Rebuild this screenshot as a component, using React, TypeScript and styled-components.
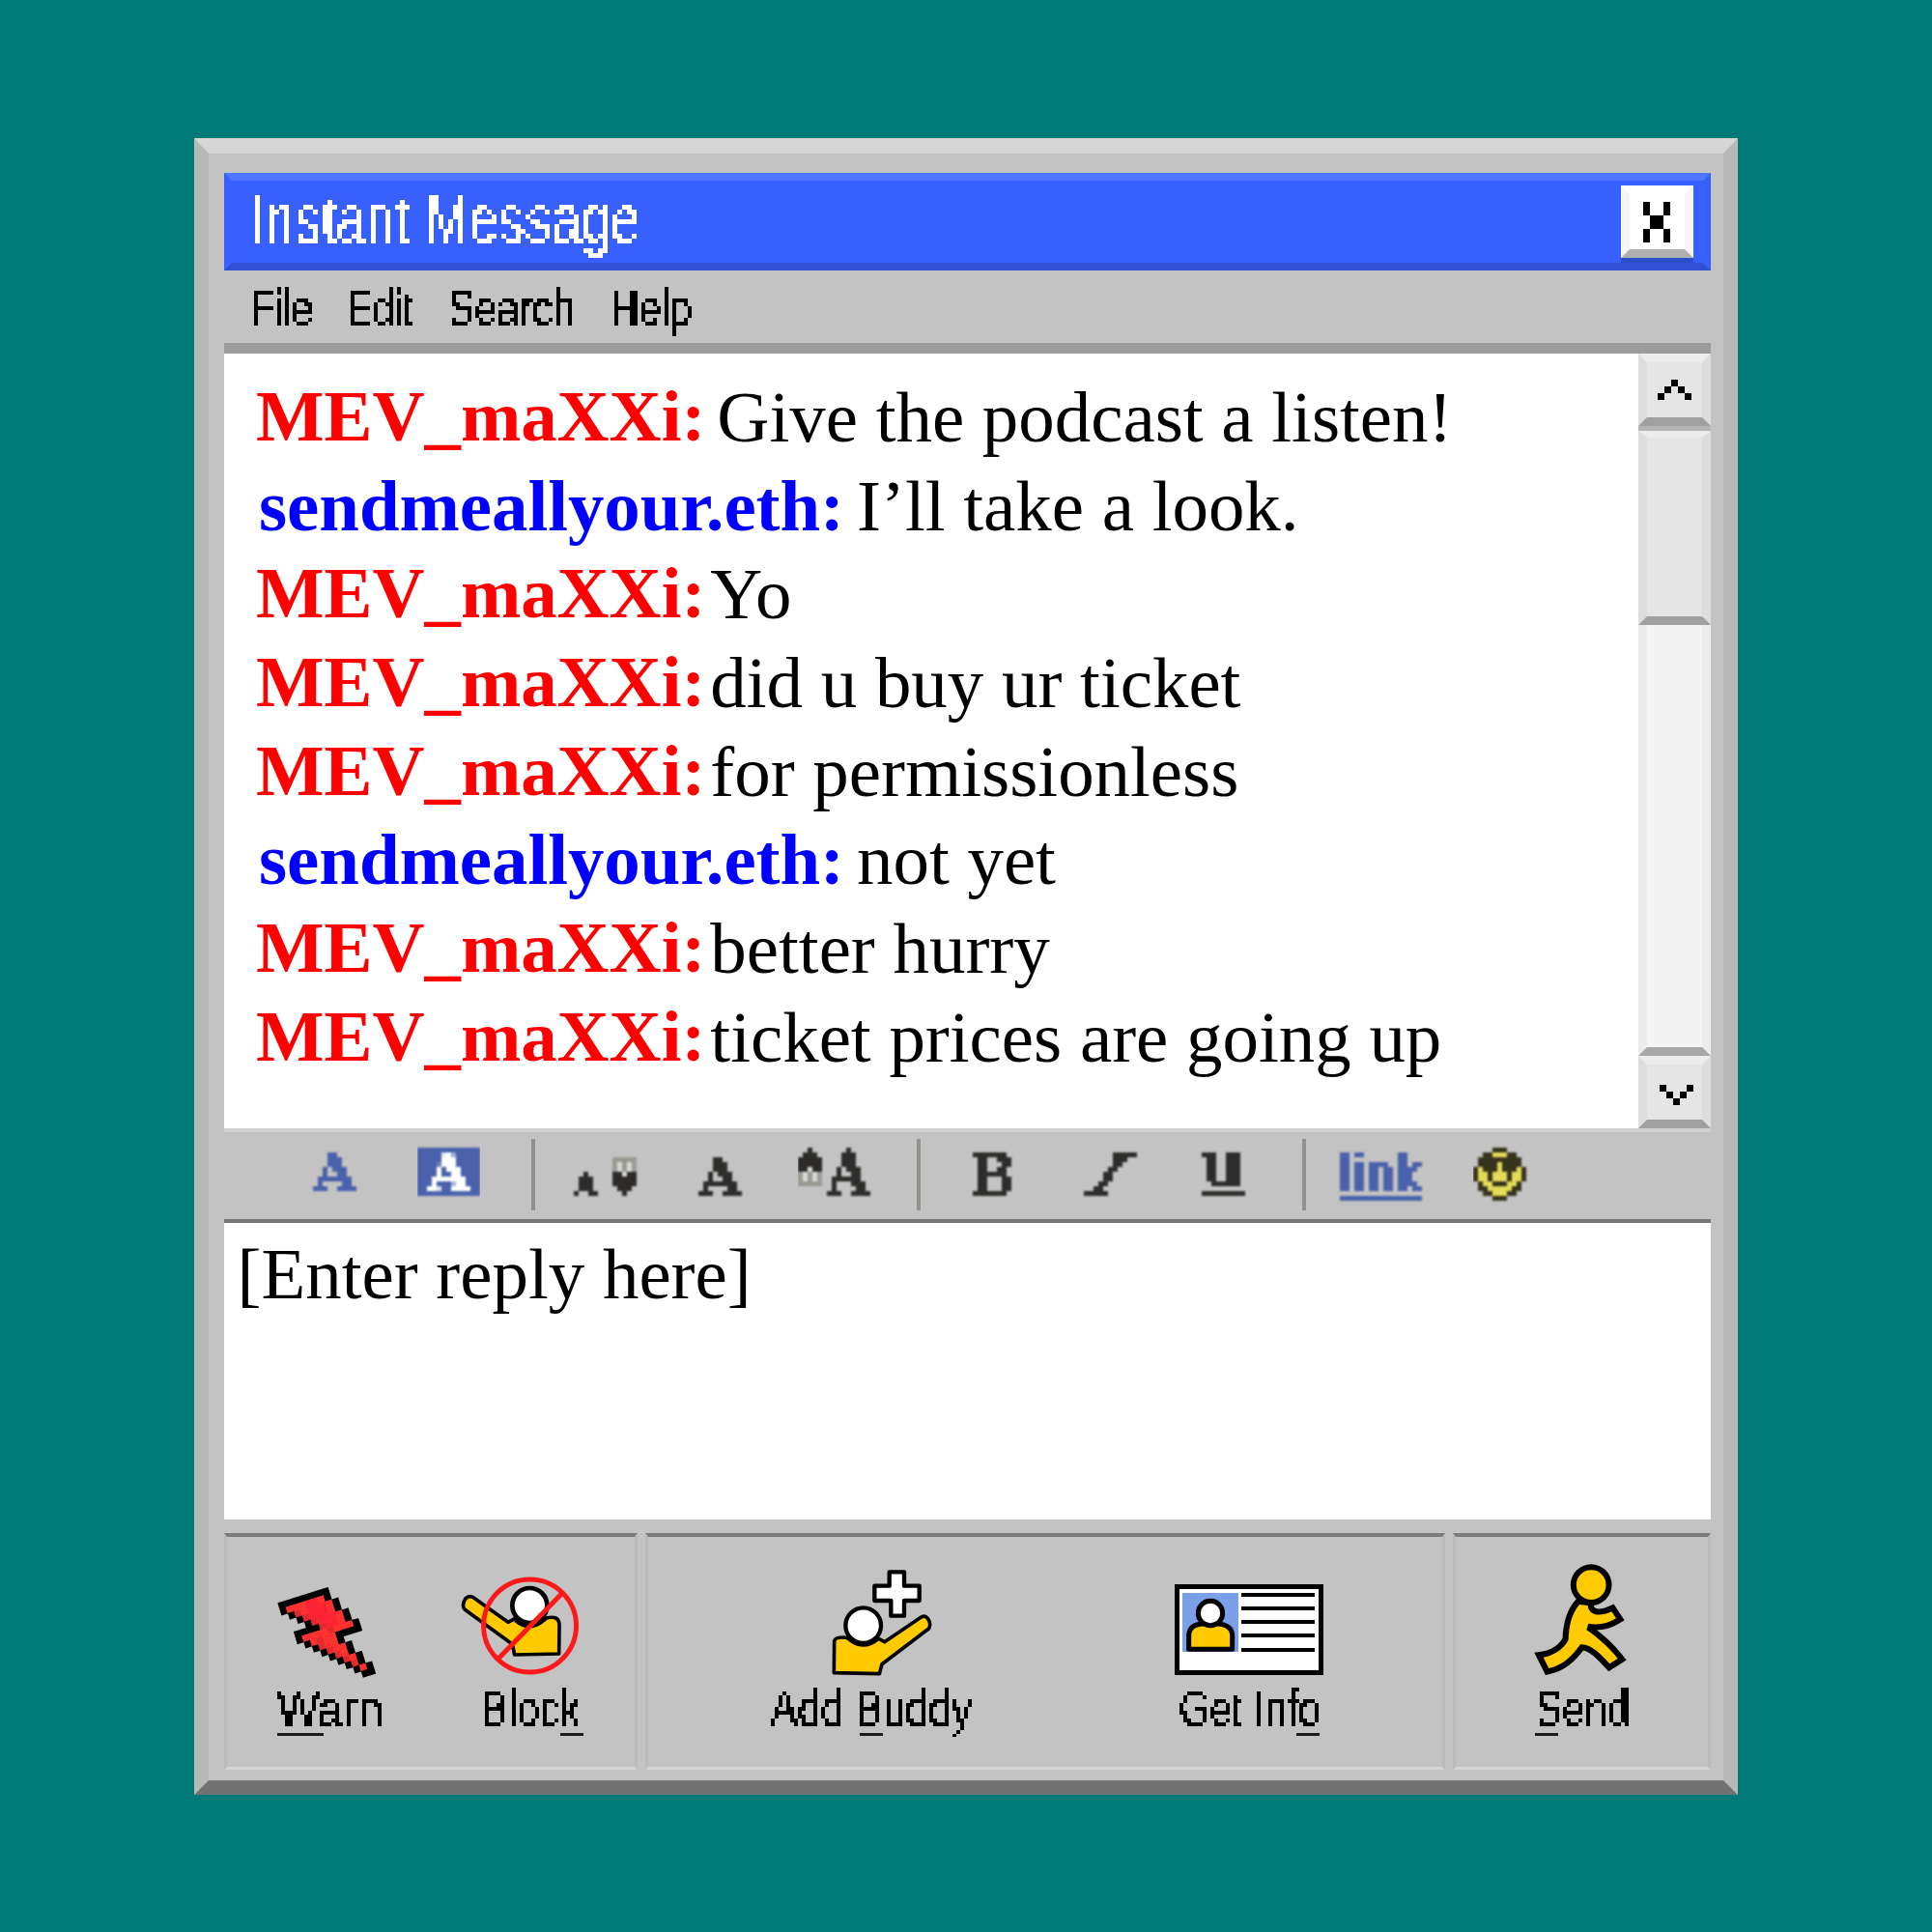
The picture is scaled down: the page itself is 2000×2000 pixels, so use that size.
import React from "react";
import styled, { createGlobalStyle } from "styled-components";

const GlobalStyle = createGlobalStyle`
  *, *::before, *::after { box-sizing: border-box; }
  html, body { margin: 0; padding: 0; background: #007979; }
`;

const Desktop = styled.main`
  display: flex;
  justify-content: center;
  width: 2000px;
  height: 2000px;
  padding-top: 143px;
  background: #007979;
  overflow: hidden;
`;

const Window = styled.section`
  display: flex;
  flex-direction: column;
  width: 1598px;
  height: 1715px;
  padding: 20px 13px 11px 16px;
  border: 15px solid;
  border-top-width: 16px;
  border-color: #d6d6d6 #b9b9b9 #727272;
  background: #c3c3c3;
`;

const TitleBar = styled.header`
  display: flex;
  justify-content: space-between;
  align-items: flex-start;
  height: 101px;
  padding: 5px 10px 0 19px;
  border: 8px solid;
  border-color: #5076ff #3860ff #2f50d4;
  background: #3860ff;
`;

const Title = styled.h1`
  margin: -5px 0 0;
  font-weight: 400;
`;

const PixelBox = styled.span<{ $w: number; $h: number; $cell: number; $x: number }>`
  display: block;
  flex: none;
  width: ${(p) => p.$w}px;
  height: ${(p) => p.$h}px;
  margin-left: ${(p) => p.$x}px;
  filter: url(#cells-${(p) => p.$cell});
`;

const PixelGlyphs = styled.span<{ $size: number; $h: number; $k: number; $color: string; $stroke: number }>`
  display: inline-block;
  font: ${(p) => p.$size}px/${(p) => p.$h}px "Liberation Sans", Arial, sans-serif;
  white-space: nowrap;
  color: ${(p) => p.$color};
  -webkit-text-stroke: ${(p) => p.$stroke}px ${(p) => p.$color};
  transform: scaleX(${(p) => p.$k});
  transform-origin: 0 0;
`;

interface PixelTextProps {
  children: string;
  width: number;
  k: number;
  x?: number;
  size?: number;
  height?: number;
  cell?: number;
  color?: string;
  stroke?: number;
}

function PixelText({
  children,
  width,
  k,
  x = 0,
  size = 52,
  height = 60,
  cell = 4,
  color = "#000",
  stroke = 0.45,
}: PixelTextProps) {
  return (
    <PixelBox $w={width} $h={height} $cell={cell} $x={x}>
      <PixelGlyphs $size={size} $h={height} $k={k} $color={color} $stroke={stroke}>
        {children}
      </PixelGlyphs>
    </PixelBox>
  );
}

const CloseButton = styled.button`
  display: flex;
  justify-content: center;
  width: 75px;
  height: 75px;
  padding: 8px 2px 0 0;
  border: 9px solid;
  border-color: #ffffff #f6f6f6 #b0b0b0;
  background: #fff;
  box-shadow: 0 5px 0 #2c4dca;
`;

const MenuBar = styled.nav`
  display: flex;
  height: 75px;
  padding: 8px 0 0 26px;
`;

const MenuItem = styled.div<{ $w: number }>`
  width: ${(p) => p.$w}px;
`;

const ChatPane = styled.div`
  display: flex;
  height: 813px;
  border-top: 11px solid #9b9b9b;
  background: #fff;
`;

const Messages = styled.ol`
  flex: 1;
  margin: 0;
  padding: 20px 0 0 33px;
  list-style: none;
`;

const Message = styled.li`
  display: flex;
  height: 91.7px;
  font: 75px/91.7px "Liberation Serif", "Times New Roman", serif;
  white-space: nowrap;
`;

const Sender = styled.b<{ $mine: boolean }>`
  font-size: 74.8px;
  margin-top: ${(p) => (p.$mine ? 0 : -1)}px;
  color: ${(p) => (p.$mine ? "#0000ff" : "#ff0000")};
  padding-left: ${(p) => (p.$mine ? 3 : 0)}px;
`;

const Body = styled.span<{ $gap: number }>`
  margin-left: ${(p) => p.$gap}px;
  font-size: 74.9px;
  color: #000;
`;

const ScrollBar = styled.div`
  display: flex;
  flex-direction: column;
  width: 75px;
`;

const ScrollButton = styled.button<{ $shadow?: boolean }>`
  display: flex;
  justify-content: center;
  flex: none;
  height: 75px;
  padding: ${(p) => (p.$shadow ? "18px 0 0" : "21px 0 0 4px")};
  border: 9px solid;
  border-color: #ececec #dddddd #a0a0a0;
  background: #e5e5e5;
  margin-bottom: ${(p) => (p.$shadow ? 5 : 0)}px;
  box-shadow: ${(p) => (p.$shadow ? "0 5px 0 #b5b5b5" : "none")};
`;

const Thumb = styled.div`
  flex: none;
  height: 201px;
  border: 9px solid;
  border-top-width: 7px;
  border-color: #ececec #dddddd #a0a0a0;
  background: #e5e5e5;
`;

const Track = styled.div`
  flex: 1;
  border: 9px solid;
  border-top: 0;
  border-color: #ececec #ececec #a8a8a8;
  background: #f4f4f4;
`;

const Toolbar = styled.div`
  display: flex;
  align-items: flex-start;
  height: 98px;
  border-top: 4px solid #d0d0d0;
  border-bottom: 4px solid #757575;
`;

const Tool = styled.div<{ $left: number; $w: number }>`
  display: flex;
  flex: none;
  width: ${(p) => p.$w}px;
  height: 90px;
  padding-top: 1px;
  margin-left: ${(p) => p.$left}px;
`;

const ToolArt = styled.svg`
  flex: none;
  height: 85px;
  overflow: visible;
  filter: url(#cells-icon);
`;

const Divider = styled.div<{ $left: number }>`
  flex: none;
  width: 4px;
  height: 74px;
  margin: 7px 0 0 ${(p) => p.$left}px;
  background: #93918b;
`;

const Reply = styled.div`
  height: 307px;
  padding: 10px 0 0 13.5px;
  background: #fff;
  color: #000;
  font: 74.9px/86px "Liberation Serif", "Times New Roman", serif;
`;

const Actions = styled.footer`
  display: grid;
  grid-template-columns: 428px 828px 267px;
  gap: 8px;
  height: 245px;
  margin-top: 14px;
`;

const Group = styled.div`
  display: flex;
  border: 3px solid;
  border-top-width: 4px;
  border-color: #7c7c7c #bbbbbb #d4d4d4;
`;

const Action = styled.div<{ $left: number; $w: number }>`
  flex: none;
  width: ${(p) => p.$w}px;
  margin-left: ${(p) => p.$left}px;
`;

const Art = styled.svg<{ $x?: number }>`
  display: block;
  height: 151px;
  margin: 0 0 -4px ${(p) => p.$x ?? 0}px;
`;

const Mnemonic = styled.i<{ $x: number; $w: number }>`
  display: block;
  width: ${(p) => p.$w}px;
  height: 3px;
  margin: -4px 0 0 ${(p) => p.$x}px;
  background: #1c1c1c;
`;

/* Each filter snaps its element onto a grid of square cells. */
function PixelFilters() {
  return (
    <svg width="0" height="0" style={{ position: "absolute" }} aria-hidden="true">
      <filter id="cells-4" x="0" y="0" width="1" height="1" colorInterpolationFilters="sRGB">
        <feFlood x="2" y="2" width="1" height="1" floodColor="#000" result="f" />
        <feComposite in="f" in2="f" operator="in" x="0" y="0" width="4" height="4" />
        <feTile result="grid" />
        <feComposite in="SourceGraphic" in2="grid" operator="in" />
        <feComponentTransfer>
          <feFuncA type="discrete" tableValues="0 1" />
        </feComponentTransfer>
        <feMorphology operator="dilate" radius="1" result="a" />
        <feOffset in="a" dx="1" result="b" />
        <feMerge result="c">
          <feMergeNode in="a" />
          <feMergeNode in="b" />
        </feMerge>
        <feOffset in="c" dy="1" result="d" />
        <feMerge>
          <feMergeNode in="c" />
          <feMergeNode in="d" />
        </feMerge>
      </filter>
      <filter id="cells-5" x="0" y="0" width="1" height="1" colorInterpolationFilters="sRGB">
        <feFlood x="2" y="2" width="1" height="1" floodColor="#000" result="f" />
        <feComposite in="f" in2="f" operator="in" x="0" y="0" width="5" height="5" />
        <feTile result="grid" />
        <feComposite in="SourceGraphic" in2="grid" operator="in" />
        <feComponentTransfer>
          <feFuncA type="discrete" tableValues="0 1" />
        </feComponentTransfer>
        <feMorphology operator="dilate" radius="2" />
      </filter>
      <filter id="cells-icon" x="0" y="0" width="1" height="1" colorInterpolationFilters="sRGB">
        <feFlood x="2" y="2" width="1" height="1" floodColor="#000" result="f" />
        <feComposite in="f" in2="f" operator="in" x="0" y="0" width="5" height="5" />
        <feTile result="grid" />
        <feComposite in="SourceGraphic" in2="grid" operator="in" />
        <feComponentTransfer>
          <feFuncA type="discrete" tableValues="0 1" />
        </feComponentTransfer>
        <feMorphology operator="dilate" radius="2" />
        <feGaussianBlur stdDeviation="0.9" />
      </filter>
    </svg>
  );
}

interface GridProps {
  rows: string[];
  cell: number;
  colors: Record<string, string>;
  overlap?: number;
}

function Cells({ rows, cell, colors, overlap = 0 }: GridProps) {
  return (
    <>
      {rows.flatMap((row, y) =>
        [...row].map((c, x) =>
          colors[c] ? (
            <rect key={`${x}-${y}`} x={x * cell} y={y * cell} width={cell + overlap} height={cell + overlap} fill={colors[c]} />
          ) : null
        )
      )}
    </>
  );
}

const UP = ["..#..", ".#.#.", "#...#"];
const DOWN = ["#...#", ".#.#.", "..#.."];

function Chevron({ rows }: { rows: string[] }) {
  return (
    <svg width="35" height="21" shapeRendering="crispEdges">
      <Cells rows={rows} cell={7} colors={{ "#": "#000" }} />
    </svg>
  );
}

const NIB_COLORS = { g: "#9a9993", w: "#d8d8d6", "#": "#2c2b29" };
const NIB_DOWN = ["ggggg", "gwgwg", "gwgwg", "##w##", "#####", "#####", ".###.", "..#.."];
const NIB_UP = [...NIB_DOWN].reverse();

const SMILEY = [
  "....kkk....",
  "..kkyyykk..",
  ".kkkkkkkkk.",
  ".kkkkykkkk.",
  "kykkkykkkyk",
  "kyykyyykyyk",
  "kyykyyykyyk",
  ".kyykkkyyk.",
  ".kkyyyyykk.",
  "..kkyyykk..",
  "....kkk....",
];

const BOLT = [
  "kkkkkkkk...",
  "krrrhhrk...",
  ".kdrhhhrk..",
  "..kdhhhrk..",
  "...kdhhhrk.",
  ".kkkkdhhrk.",
  ".krrrrdrrrk",
  "..krdrrkkkk",
  "...kdrrk...",
  "....kdrrk..",
  ".....kdrk..",
  "......kdrk.",
  ".......kdk.",
  "........krk",
  ".........kk",
];

interface LetterProps {
  ch: string;
  x: number;
  y: number;
  size: number;
  w: number;
  fill: string;
  weight?: number;
}

function Letter({ ch, x, y, size, w, fill, weight = 700 }: LetterProps) {
  return (
    <text
      x={x}
      y={y}
      fontFamily='"DejaVu Serif", Georgia, serif'
      fontWeight={weight}
      fontSize={size}
      textLength={w}
      lengthAdjust="spacingAndGlyphs"
      fill={fill}
      stroke={fill}
      strokeWidth="1.2"
    >
      {ch}
    </text>
  );
}

const INK = "#2e2d2b";
const BLUE = "#4a62ab";

function FormatToolbar() {
  return (
    <Toolbar>
      <Tool $left={92} $w={44}>
        <ToolArt width="50"><Letter ch="A" x={0} y={60} size={55} w={45} fill={BLUE} /></ToolArt>
      </Tool>
      <Tool $left={64} $w={65}>
        <ToolArt width="65">
          <rect x="0" y="15" width="65" height="50" fill={BLUE} />
          <Letter ch="A" x={10} y={60} size={55} w={45} fill="#fff" />
        </ToolArt>
      </Tool>
      <Divider $left={53} />
      <Tool $left={40} $w={66}>
        <ToolArt width="70">
          <Letter ch="A" x={0} y={65} size={34} w={25} fill={INK} />
          <g transform="translate(40 25)"><Cells rows={NIB_DOWN} cell={5} colors={NIB_COLORS} /></g>
        </ToolArt>
      </Tool>
      <Tool $left={63} $w={44}>
        <ToolArt width="50"><Letter ch="A" x={0} y={65} size={55} w={45} fill={INK} /></ToolArt>
      </Tool>
      <Tool $left={59} $w={76}>
        <ToolArt width="80">
          <g transform="translate(0 15)"><Cells rows={NIB_UP} cell={5} colors={NIB_COLORS} /></g>
          <Letter ch="A" x={30} y={65} size={68} w={45} fill={INK} />
        </ToolArt>
      </Tool>
      <Divider $left={47} />
      <Tool $left={54} $w={42}>
        <ToolArt width="50"><Letter ch="B" x={0} y={65} size={62} w={43} fill={INK} /></ToolArt>
      </Tool>
      <Tool $left={68} $w={60}>
        <ToolArt width="70">
          <g transform="translate(-2 65) skewX(-36)">
            <Letter ch="I" x={0} y={0} size={62} w={35} fill={INK} weight={400} />
          </g>
        </ToolArt>
      </Tool>
      <Tool $left={67} $w={46}>
        <ToolArt width="50">
          <Letter ch="u" x={0} y={55} size={63} w={44} fill={INK} />
          <rect x="0" y="60" width="45" height="5" fill={INK} />
        </ToolArt>
      </Tool>
      <Divider $left={58} />
      <Tool $left={35} $w={85}>
        <ToolArt width="90">
          <text x="-2" y="60" fontFamily='"DejaVu Sans", Verdana, sans-serif' fontWeight="700" fontSize="56" textLength="88" lengthAdjust="spacingAndGlyphs" fill={BLUE}>link</text>
          <rect x="0" y="65" width="85" height="5" fill={BLUE} />
        </ToolArt>
      </Tool>
      <Tool $left={53} $w={56}>
        <ToolArt width="60">
          <g transform="translate(0 15)">
            <Cells rows={SMILEY} cell={5} colors={{ k: "#37341d", y: "#e3dc58" }} />
          </g>
        </ToolArt>
      </Tool>
    </Toolbar>
  );
}

function BoltIcon() {
  return (
    <Art width="112" viewBox="285 93 336 453">
      <g transform="matrix(0.954 -0.3 0.294 0.935 292 298)">
        <Cells rows={BOLT} cell={20.4} overlap={1.2} colors={{ k: "#000", r: "#ff3030", h: "#ff2233", d: "#e22a2a" }} />
      </g>
    </Art>
  );
}

function BlockIcon() {
  return (
    <Art width="124" viewBox="138 93 372 453">
      <g stroke="#000" strokeWidth="11" strokeLinejoin="round" fill="#ffca00">
        <path d="M156 284 Q166 274 178 280 L288 358 L310 346 L404 346 Q446 334 447 366 L446 456 L308 459 L301 426 L154 319 Q142 306 156 284 Z" />
        <path d="M310 352 Q357 392 404 348" fill="none" />
        <circle cx="355" cy="306" r="54" fill="#fff" strokeWidth="14" />
      </g>
      <g stroke="#ff181a" strokeWidth="15" fill="none">
        <circle cx="355.500" cy="369" r="144" />
        <path d="M459 265 L257 472" />
      </g>
    </Art>
  );
}

function AddBuddyIcon() {
  return (
    <Art $x={62} width="108" viewBox="270 93 324 453">
      <g stroke="#000" strokeWidth="11" strokeLinejoin="round">
        <path d="M283 515 L284 416 Q288 402 324 406 L420 408 L440 419 L554 342 Q566 335 574 346 Q586 362 578 377 L432 488 L424 518 Z" fill="#ffca00" />
        <path d="M324 406 Q372 450 422 408" fill="none" />
        <circle cx="374" cy="368" r="55" fill="#fff" strokeWidth="13" />
        <path d="M455 202 H501 V245 H548 V291 H501 V338 H460 V291 H409 V245 H455 Z" fill="#fff" strokeWidth="13" />
      </g>
    </Art>
  );
}

function InfoIcon() {
  return (
    <Art width="154" viewBox="108 93 462 453">
      <rect x="115.500" y="247.500" width="447" height="267" fill="#fff" stroke="#000" strokeWidth="15" />
      <rect x="132" y="267" width="174" height="183" fill="#7b9fe8" />
      <g stroke="#000" strokeWidth="15" strokeLinejoin="round">
        <path d="M152 442 V396 Q156 364 195 363 H243 Q284 366 287 396 V442 Z" fill="#ffca00" />
        <circle cx="219" cy="330" r="38" fill="#fff" />
      </g>
      {[267, 309, 351, 393, 438].map((y) => (
        <rect key={y} x="315" y={y} width="228" height="12" />
      ))}
    </Art>
  );
}

function RunnerIcon() {
  const body =
    "M555 303 L581 306 C584 336 616 343 655 325 L669 346 C640 364 612 367 583 362 L577 382 C615 408 650 440 674 471 L649 487 C620 455 590 424 558 427 C535 460 505 492 460 501 L443 467 C480 462 512 435 521 412 C522 372 530 332 555 303 Z";
  return (
    <Art width="98" viewBox="414 93 294 453">
      <path d={body} fill="#000" stroke="#000" strokeWidth="37" strokeMiterlimit="6" />
      <circle cx="591.500" cy="242" r="64" />
      <circle cx="591.500" cy="242" r="46" fill="#ffca00" />
      <path d={body} fill="#ffca00" />
    </Art>
  );
}

const LOG: { mine: boolean; text: string; gap: number }[] = [
  { mine: false, text: "Give the podcast a listen!", gap: 12 },
  { mine: true, text: "I’ll take a look.", gap: 13 },
  { mine: false, text: "Yo", gap: 5 },
  { mine: false, text: "did u buy ur ticket", gap: 5 },
  { mine: false, text: "for permissionless", gap: 5 },
  { mine: true, text: "not yet", gap: 13 },
  { mine: false, text: "better hurry", gap: 5 },
  { mine: false, text: "ticket prices are going up", gap: 5 },
];

export default function App() {
  return (
    <Desktop>
      <GlobalStyle />
      <PixelFilters />
      <Window>
        <TitleBar>
          <Title>
            <PixelText width={420} height={80} size={70} k={0.786} cell={5} color="#fff" stroke={0.2}>Instant Message</PixelText>
          </Title>
          <CloseButton aria-label="Close">
            <svg width="28" height="42" shapeRendering="crispEdges">
              <path d="M0 0H7V14H21V0H28V14H21V28H28V42H21V28H7V42H0V28H7V14H0Z" />
            </svg>
          </CloseButton>
        </TitleBar>
        <MenuBar>
          <MenuItem $w={100}><PixelText width={100} k={0.78}>File</PixelText></MenuItem>
          <MenuItem $w={105}><PixelText width={105} k={0.78}>Edit</PixelText></MenuItem>
          <MenuItem $w={168}><PixelText width={168} k={0.8}>Search</PixelText></MenuItem>
          <MenuItem $w={100}><PixelText width={100} k={0.79}>Help</PixelText></MenuItem>
        </MenuBar>
        <ChatPane>
          <Messages>
            {LOG.map((m) => (
              <Message key={m.text}>
                <Sender $mine={m.mine}>{m.mine ? "sendmeallyour.eth:" : "MEV_maXXi:"}</Sender>
                <Body $gap={m.gap}>{m.text}</Body>
              </Message>
            ))}
          </Messages>
          <ScrollBar>
            <ScrollButton $shadow aria-label="Scroll up"><Chevron rows={UP} /></ScrollButton>
            <Thumb />
            <Track />
            <ScrollButton aria-label="Scroll down"><Chevron rows={DOWN} /></ScrollButton>
          </ScrollBar>
        </ChatPane>
        <FormatToolbar />
        <Reply>[Enter reply here]</Reply>
        <Actions>
          <Group>
            <Action $left={50} $w={140}>
              <BoltIcon />
              <PixelText width={120} k={0.9} x={1}>Warn</PixelText>
              <Mnemonic $x={2} $w={48} />
            </Action>
            <Action $left={51} $w={150}>
              <BlockIcon />
              <PixelText width={110} k={0.81} x={21}>Block</PixelText>
              <Mnemonic $x={104} $w={24} />
            </Action>
          </Group>
          <Group>
            <Action $left={126} $w={220}>
              <AddBuddyIcon />
              <PixelText width={220} k={0.82}>Add Buddy</PixelText>
              <Mnemonic $x={93} $w={24} />
            </Action>
            <Action $left={199} $w={160}>
              <InfoIcon />
              <PixelText width={155} k={0.79} x={4}>Get Info</PixelText>
              <Mnemonic $x={126} $w={24} />
            </Action>
          </Group>
          <Group>
            <Action $left={81} $w={120}>
              <RunnerIcon />
              <PixelText width={120} k={0.8} x={1}>Send</PixelText>
              <Mnemonic $x={1} $w={24} />
            </Action>
          </Group>
        </Actions>
      </Window>
    </Desktop>
  );
}
